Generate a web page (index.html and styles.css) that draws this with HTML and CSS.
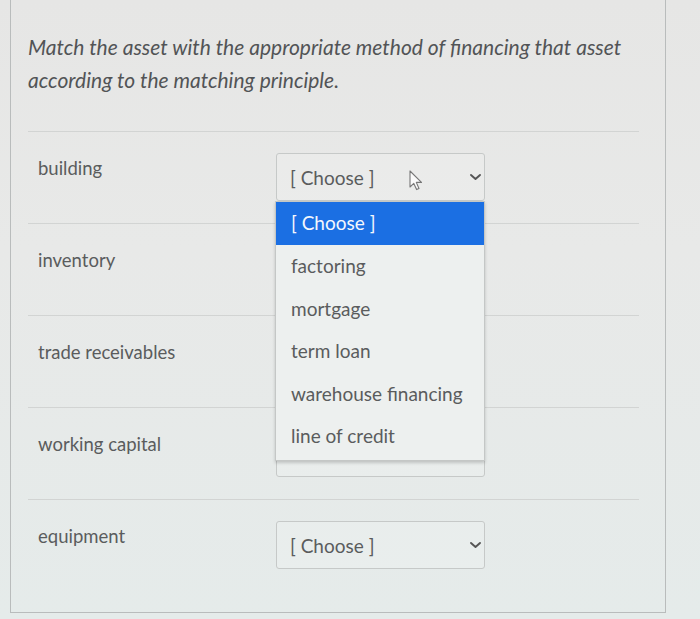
FILE: index.html
```html
<!DOCTYPE html>
<html>
<head>
<meta charset="utf-8">
<link rel="stylesheet" href="styles.css">
</head>
<body>
<div class="page">
  <div class="card">
    <p class="question">Match the asset with the appropriate method of financing that asset<br>according to the matching principle.</p>
    <div class="rows">
      <div class="row">
        <div class="label">building</div>
        <div class="select-wrap">
          <div class="select"><span>[ Choose ]</span><svg class="chev" width="13" height="8" viewBox="0 0 13 8"><path d="M2 2 L6.5 6 L11 2" fill="none" stroke="#555" stroke-width="1.9" stroke-linecap="round" stroke-linejoin="round"/></svg></div>
          <svg class="cursor" width="14" height="21" viewBox="0 0 14 21"><path d="M1 1 L1 17 L4.8 13.4 L7.6 19.6 L10 18.5 L7.3 12.4 L12.5 12.4 Z" fill="#fafafa" stroke="#777" stroke-width="1.1" stroke-linejoin="round"/></svg>
          <ul class="menu">
            <li class="active">[ Choose ]</li>
            <li>factoring</li>
            <li>mortgage</li>
            <li>term loan</li>
            <li>warehouse financing</li>
            <li>line of credit</li>
          </ul>
        </div>
      </div>
      <div class="row">
        <div class="label">inventory</div>
        <div class="select-wrap"><div class="select"></div></div>
      </div>
      <div class="row">
        <div class="label">trade receivables</div>
        <div class="select-wrap"><div class="select"></div></div>
      </div>
      <div class="row">
        <div class="label">working capital</div>
        <div class="select-wrap"><div class="select"></div></div>
      </div>
      <div class="row last">
        <div class="label">equipment</div>
        <div class="select-wrap">
          <div class="select"><span>[ Choose ]</span><svg class="chev" width="13" height="8" viewBox="0 0 13 8"><path d="M2 2 L6.5 6 L11 2" fill="none" stroke="#555" stroke-width="1.9" stroke-linecap="round" stroke-linejoin="round"/></svg></div>
        </div>
      </div>
    </div>
  </div>
</div>
</body>
</html>
```
FILE: styles.css
```css
* { box-sizing: border-box; }
html, body {
  margin: 0;
  padding: 0;
  height: 619px;
  overflow: hidden;
}
body {
  background: linear-gradient(180deg, #e6e6e5 0%, #e8e9e8 40%, #e5ebea 100%);
  font-family: Lato, "Noto Sans", sans-serif;
  color: #5a5c5d;
}
.page {
  padding: 0 34px 0 10px;
  height: 619px;
}
.card {
  margin-top: -10px;
  height: 623px;
  border: 1px solid #b9bcbc;
  border-top: none;
  padding: 0 26px 0 17px;
}
.question {
  margin: 0;
  padding-top: 40px;
  font-style: italic;
  font-size: 21px;
  line-height: 33px;
  color: #525456;
  padding-bottom: 35px;
  white-space: nowrap;
}
.rows {
  border-top: 1px solid #d2d4d3;
}
.row {
  display: flex;
  height: 92px;
  border-bottom: 1px solid #d2d4d3;
}
.row.last {
  border-bottom: none;
}
.label {
  width: 248px;
  padding-left: 10px;
  padding-top: 24px;
  font-size: 18.5px;
  line-height: 24px;
}
.select-wrap {
  position: relative;
  padding-top: 21px;
}
.select {
  width: 209px;
  height: 48px;
  border: 1px solid #c6c9c8;
  border-radius: 3px;
  background: rgba(255,255,255,0.15);
  display: flex;
  align-items: center;
  justify-content: space-between;
  padding: 0 2px 0 13px;
  font-size: 19px;
  color: #5a5c5d;
}
.chev {
  display: block;
}
.cursor {
  position: absolute;
  left: 133px;
  top: 38px;
}
.menu {
  position: absolute;
  left: -1px;
  top: 69px;
  width: 210px;
  margin: 0;
  padding: 0 0 2px;
  list-style: none;
  background: #edf0ef;
  border: 1px solid #c4c7c6;
  box-shadow: 0 2px 3px rgba(0,0,0,0.18);
  z-index: 2;
}
.menu li {
  height: 42.5px;
  line-height: 42px;
  padding-left: 15px;
  font-size: 19px;
  color: #5a5c5d;
}
.menu li.active {
  background: #1b6fe3;
  color: #f4f7fd;
  height: 43px;
}
```
